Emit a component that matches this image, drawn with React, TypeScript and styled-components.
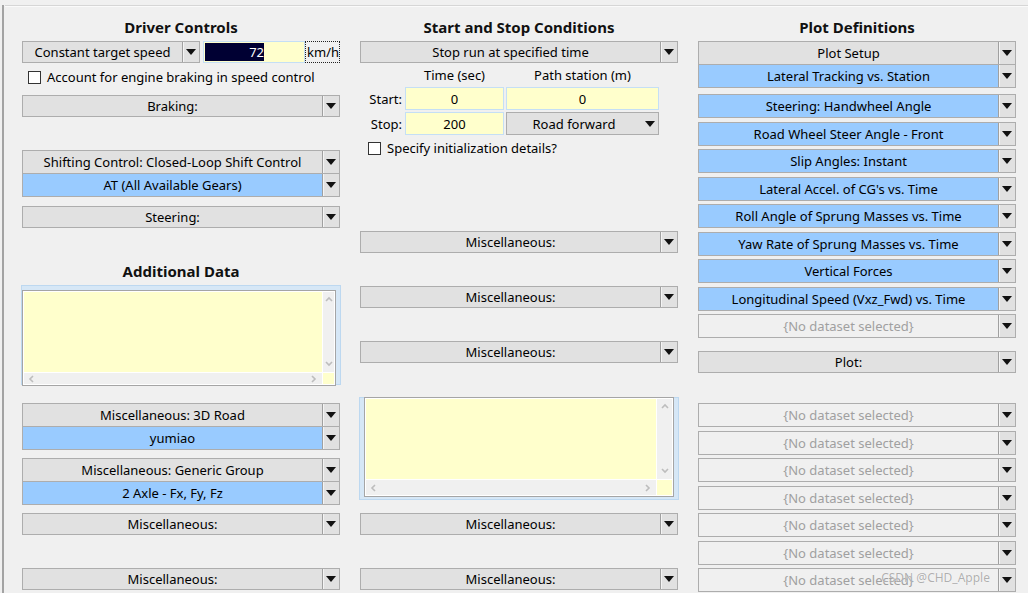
import React from 'react';
import styled, { createGlobalStyle } from 'styled-components';

const GlobalStyle = createGlobalStyle`
  html, body { margin: 0; padding: 0; background: #f0f0f0; }
  body {
    font-family: "Noto Sans", "Open Sans", sans-serif;
    font-size: 13px;
    color: #000;
  }
  * { box-sizing: border-box; }
`;

type Tone = 'gray' | 'blue' | 'empty';

const toneBg: Record<Tone, string> = { gray: '#e1e1e1', blue: '#99cbff', empty: '#f0f0f0' };
const toneFg: Record<Tone, string> = { gray: '#000', blue: '#000', empty: '#a0a0a0' };

const Frame = styled.div`
  position: relative;
  width: 1028px;
  height: 593px;
  overflow: hidden;
  background: #f0f0f0;
  padding-left: 2px;
`;

const Edge = styled.div`
  height: 100%;
  border-left: 2px solid #a3a3a3;
  padding-left: 1px;
`;

const Board = styled.div`
  margin-top: 5px;
  border-top: 1px solid #d6d6d6;
  box-shadow: inset 0 1px 0 #fafafa;
  display: grid;
  grid-template-columns: repeat(3, 318px);
  column-gap: 20px;
  padding-left: 17px;
  align-items: start;
`;

const Column = styled.div`
  display: flex;
  flex-direction: column;
`;

const Heading = styled.div<{ $mt?: number }>`
  margin-top: ${p => p.$mt ?? 10}px;
  height: 22px;
  line-height: 22px;
  text-align: center;
  font-size: 15px;
  font-weight: 700;
  color: #111;
`;

const SelectBox = styled.div<{ $h: number; $mt: number; $bare: boolean; $w?: number }>`
  display: flex;
  height: ${p => p.$h}px;
  margin-top: ${p => p.$mt}px;
  ${p => (p.$w ? `width: ${p.$w}px; flex: none;` : '')}
  border: ${p => (p.$bare ? 'none' : '1px solid #adadad')};
  background: #e1e1e1;
`;

const SelectText = styled.div<{ $tone: Tone }>`
  flex: 1;
  display: flex;
  align-items: center;
  justify-content: center;
  white-space: nowrap;
  overflow: hidden;
  background: ${p => toneBg[p.$tone]};
  color: ${p => toneFg[p.$tone]};
`;

const ArrowCell = styled.div<{ $sep: boolean }>`
  width: 17px;
  flex: none;
  display: flex;
  align-items: center;
  justify-content: center;
  border-left: ${p => (p.$sep ? '1px solid #a0a0a0' : 'none')};
  box-shadow: ${p => (p.$sep ? 'inset 1px 0 0 #f4f4f4' : 'none')};
`;

const Arrow = styled.span`
  width: 0;
  height: 0;
  border-left: 5px solid transparent;
  border-right: 5px solid transparent;
  border-top: 6px solid #111;
`;

type DropProps = {
  text: string;
  tone?: Tone;
  h?: number;
  mt?: number;
  bare?: boolean;
  sep?: boolean;
  w?: number;
};

function Drop({ text, tone = 'gray', h = 22, mt = 0, bare = false, sep = true, w }: DropProps) {
  return (
    <SelectBox $h={h} $mt={mt} $bare={bare} $w={w}>
      <SelectText $tone={tone}>{text}</SelectText>
      <ArrowCell $sep={sep}>
        <Arrow />
      </ArrowCell>
    </SelectBox>
  );
}

const Pair = styled.div<{ $mt: number }>`
  margin-top: ${p => p.$mt}px;
  border: 1px solid #adadad;
  display: flex;
  flex-direction: column;
  gap: 1px;
  background: #adadad;
`;

function DropPair({ top, bottom, mt, topTone = 'gray' }: { top: string; bottom: string; mt: number; topTone?: Tone }) {
  return (
    <Pair $mt={mt}>
      <Drop text={top} tone={topTone} bare />
      <Drop text={bottom} tone="blue" bare />
    </Pair>
  );
}

const SpeedRow = styled.div`
  margin-top: 3px;
  display: flex;
  align-items: stretch;
  height: 22px;
`;

const SpeedBox = styled.div`
  margin-left: 3px;
  width: 110px;
  border: 1px solid #c5dff5;
  background: #ffffcc;
  padding: 1px;
  display: flex;
`;

const Selected = styled.span`
  width: 59px;
  background: #000033;
  color: #fff;
  text-align: right;
  line-height: 18px;
`;

const UnitLabel = styled.div`
  width: 36px;
  border: 1px dotted #222;
  padding-left: 1px;
  line-height: 20px;
`;

const CheckRow = styled.label<{ $mt: number; $indent: number }>`
  margin-top: ${p => p.$mt}px;
  height: 22px;
  display: flex;
  align-items: center;
  gap: 6px;
  padding-left: ${p => p.$indent}px;
`;

const Box = styled.span`
  width: 13px;
  height: 13px;
  border: 1px solid #333;
  background: #fff;
  flex: none;
`;

const TimeGrid = styled.div`
  margin-top: 2px;
  display: grid;
  grid-template-columns: 43px 99px 153px;
  grid-template-rows: 20px 23px 23px;
  column-gap: 2px;
  row-gap: 2px;
`;

const ColLabel = styled.div`
  display: flex;
  align-items: center;
  justify-content: center;
`;

const RowLabel = styled.div`
  display: flex;
  align-items: center;
  justify-content: flex-end;
  padding-right: 1px;
`;

const YellowField = styled.div`
  border: 1px solid #c5dff5;
  background: #ffffcc;
  display: flex;
  align-items: center;
  justify-content: center;
`;

const Glow = styled.div<{ $mt: number; $h: number; $pad: string }>`
  margin-top: ${p => p.$mt}px;
  margin-left: -1px;
  width: 320px;
  height: ${p => p.$h}px;
  padding: ${p => p.$pad};
  background: #d6e7f6;
  box-shadow: inset 0 0 0 1px #bdd8f0;
`;

const TextBox = styled.div<{ $h: number; $sb: number }>`
  height: ${p => p.$h}px;
  border: 1px solid #a5a5a5;
  background: #fff;
  padding: 1px;
  display: grid;
  grid-template-columns: 1fr ${p => p.$sb}px;
  grid-template-rows: 1fr ${p => p.$sb}px;
  gap: 1px;
`;

const Yellow = styled.div`
  background: #ffffcc;
`;

const Track = styled.div<{ $vertical: boolean }>`
  background: #f0f0f0;
  display: flex;
  flex-direction: ${p => (p.$vertical ? 'column' : 'row')};
  justify-content: space-between;
  align-items: center;
  padding: ${p => (p.$vertical ? '4px 0' : '0 4px')};
`;

function Chevron({ dir }: { dir: 'up' | 'down' | 'left' | 'right' }) {
  const pts = {
    up: '1,5 4,2 7,5',
    down: '1,2 4,5 7,2',
    left: '5,1 2,4 5,7',
    right: '2,1 5,4 2,7',
  }[dir];
  return (
    <svg width="8" height="8" viewBox="0 0 8 8">
      <polyline points={pts} fill="none" stroke="#bdbdbd" strokeWidth="1.6" />
    </svg>
  );
}

function ScrollText({ h, sb }: { h: number; sb: number }) {
  return (
    <TextBox $h={h} $sb={sb}>
      <Yellow />
      <Track $vertical>
        <Chevron dir="up" />
        <Chevron dir="down" />
      </Track>
      <Track $vertical={false}>
        <Chevron dir="left" />
        <Chevron dir="right" />
      </Track>
      <Yellow />
    </TextBox>
  );
}

const List = styled.div<{ $mt: number }>`
  margin-top: ${p => p.$mt}px;
  display: flex;
  flex-direction: column;
  gap: 3.5px;
`;

const Watermark = styled.div`
  position: absolute;
  right: 38px;
  bottom: 7px;
  font-size: 12px;
  color: rgba(150, 150, 150, 0.75);
  text-shadow: 0 0 1px #fff;
`;

const plotRows = [
  'Steering: Handwheel Angle',
  'Road Wheel Steer Angle - Front',
  'Slip Angles: Instant',
  "Lateral Accel. of CG's vs. Time",
  'Roll Angle of Sprung Masses vs. Time',
  'Yaw Rate of Sprung Masses vs. Time',
  'Vertical Forces',
  'Longitudinal Speed (Vxz_Fwd) vs. Time',
];

export default function App() {
  return (
    <Frame>
      <GlobalStyle />
      <Edge>
        <Board>
          <Column>
            <Heading>Driver Controls</Heading>
            <SpeedRow>
              <Drop text="Constant target speed" w={178} />
              <SpeedBox>
                <Selected>72</Selected>
              </SpeedBox>
              <UnitLabel>km/h</UnitLabel>
            </SpeedRow>
            <CheckRow $mt={3} $indent={6}>
              <Box />
              Account for engine braking in speed control
            </CheckRow>
            <Drop text="Braking:" mt={7} />
            <DropPair top="Shifting Control: Closed-Loop Shift Control" bottom="AT (All Available Gears)" mt={33} />
            <Drop text="Steering:" mt={9} />
            <Heading $mt={32}>Additional Data</Heading>
            <Glow $mt={3} $h={100} $pad="5px 5px 0 1px">
              <ScrollText h={96} sb={11} />
            </Glow>
            <DropPair top="Miscellaneous: 3D Road" bottom="yumiao" mt={18} />
            <DropPair top="Miscellaneous: Generic Group" bottom="2 Axle - Fx, Fy, Fz" mt={8} />
            <Drop text="Miscellaneous:" mt={8} />
            <Drop text="Miscellaneous:" mt={33} />
          </Column>

          <Column>
            <Heading>Start and Stop Conditions</Heading>
            <Drop text="Stop run at specified time" mt={3} />
            <TimeGrid>
              <span />
              <ColLabel>Time (sec)</ColLabel>
              <ColLabel>Path station (m)</ColLabel>
              <RowLabel>Start:</RowLabel>
              <YellowField>0</YellowField>
              <YellowField>0</YellowField>
              <RowLabel>Stop:</RowLabel>
              <YellowField>200</YellowField>
              <Drop text="Road forward" h={23} sep={false} />
            </TimeGrid>
            <CheckRow $mt={2} $indent={8}>
              <Box />
              Specify initialization details?
            </CheckRow>
            <Drop text="Miscellaneous:" mt={72} />
            <Drop text="Miscellaneous:" mt={33} />
            <Drop text="Miscellaneous:" mt={33} />
            <Glow $mt={34} $h={103} $pad="0 5px 3px 5px">
              <ScrollText h={100} sb={15} />
            </Glow>
            <Drop text="Miscellaneous:" mt={13} />
            <Drop text="Miscellaneous:" mt={33} />
          </Column>

          <Column>
            <Heading>Plot Definitions</Heading>
            <DropPair top="Plot Setup" bottom="Lateral Tracking vs. Station" mt={3} />
            <List $mt={6}>
              {plotRows.map(r => (
                <Drop key={r} text={r} tone="blue" h={24} />
              ))}
              <Drop text="{No dataset selected}" tone="empty" h={24} />
            </List>
            <Drop text="Plot:" mt={13} />
            <List $mt={30}>
              {Array.from({ length: 7 }, (_, i) => (
                <Drop key={i} text="{No dataset selected}" tone="empty" h={24} />
              ))}
            </List>
          </Column>
        </Board>
      </Edge>
      <Watermark>CSDN @CHD_Apple</Watermark>
    </Frame>
  );
}
